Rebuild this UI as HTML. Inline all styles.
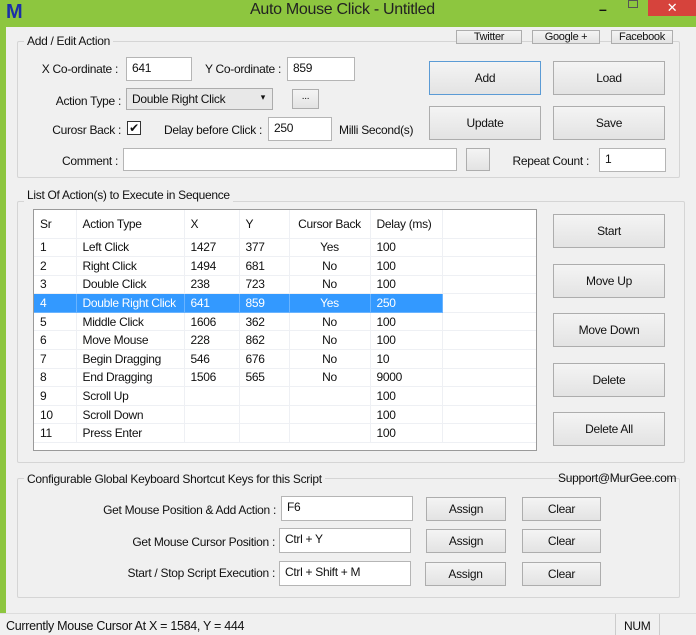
<!DOCTYPE html>
<html><head><meta charset="utf-8"><style>
*{box-sizing:border-box;margin:0;padding:0}
body{width:696px;height:635px;position:relative;overflow:hidden;background:#8dc63f;font-family:"Liberation Sans",sans-serif;font-size:12px;color:#111;letter-spacing:-0.3px}
.a{position:absolute;white-space:nowrap}
.body{position:absolute;left:6px;top:27px;width:690px;height:586px;background:#f0f0f0}
.grp{position:absolute;border:1px solid #d5d5d5;border-radius:2px}
.gt{position:absolute;background:#f0f0f0;padding:0 3px}
.btn{position:absolute;background:linear-gradient(#f4f4f4,#e3e3e3);border:1px solid #adadad;text-align:center;font-size:12px}
.tb{position:absolute;background:#fff;border:1px solid #b5b5b5;padding:3px 0 0 5px}
.lbl{position:absolute;text-align:right;white-space:nowrap}
table{border-collapse:collapse;font-size:12px}
td{height:18.6px;padding:0 0 0 6px;border-bottom:1px solid #eef0f4;border-right:1px solid #eef0f4}
.sel td{background:#3399ff;color:#fff;border-color:#6ab4ff}
</style></head><body>
<div class="a" style="left:6px;top:1px;font-size:20px;font-weight:bold;color:#1a2fa8">M</div>
<div class="a" style="left:250px;top:1px;font-size:16px;color:#222">Auto Mouse Click - Untitled</div>
<div class="a" style="left:599px;top:1px;font-size:14px;font-weight:bold">–</div>
<div class="a" style="left:628px;top:0px;width:10px;height:8px;border:1px solid #555"></div>
<div class="a" style="left:648px;top:0;width:48px;height:16px;background:#d6433c;color:#fff;text-align:center;font-size:13px;line-height:15px">✕</div>
<div class="body"></div>

<div class="grp" style="left:17px;top:41px;width:663px;height:137px"></div>
<div class="gt" style="left:24px;top:34px">Add / Edit Action</div>
<div class="btn" style="left:456px;top:30px;width:66px;height:14px;font-size:11px;line-height:12px">Twitter</div>
<div class="btn" style="left:532px;top:30px;width:68px;height:14px;font-size:11px;line-height:12px">Google +</div>
<div class="btn" style="left:611px;top:30px;width:62px;height:14px;font-size:11px;line-height:12px">Facebook</div>
<div class="lbl" style="right:578px;top:62px">X Co-ordinate :</div>
<div class="tb" style="left:126px;top:57px;width:66px;height:24px">641</div>
<div class="lbl" style="right:415px;top:62px">Y Co-ordinate :</div>
<div class="tb" style="left:287px;top:57px;width:68px;height:24px">859</div>
<div class="lbl" style="right:575px;top:94px">Action Type :</div>
<div class="tb" style="left:126px;top:88px;width:147px;height:22px;background:#e8e8e8;border-color:#acacac">Double Right Click<span style="position:absolute;right:7px;top:3px;font-size:9px">▾</span></div>
<div class="btn" style="left:292px;top:89px;width:27px;height:20px;line-height:14px;font-size:10px">...</div>
<div class="lbl" style="right:575px;top:123px">Curosr Back :</div>
<div class="a" style="left:127px;top:121px;width:14px;height:14px;border:1px solid #333;background:#fff;font-size:12px;line-height:12px;text-align:center">✔</div>
<div class="lbl" style="right:434px;top:123px">Delay before Click :</div>
<div class="tb" style="left:268px;top:117px;width:64px;height:24px">250</div>
<div class="lbl" style="left:339px;top:123px">Milli Second(s)</div>
<div class="lbl" style="right:578px;top:154px">Comment :</div>
<div class="tb" style="left:123px;top:148px;width:334px;height:23px"></div>
<div class="btn" style="left:466px;top:148px;width:24px;height:23px"></div>
<div class="lbl" style="right:107px;top:154px">Repeat Count :</div>
<div class="tb" style="left:599px;top:148px;width:67px;height:24px">1</div>
<div class="btn" style="left:429px;top:61px;width:112px;height:34px;line-height:32px;border-color:#5b9bd5">Add</div>
<div class="btn" style="left:553px;top:61px;width:112px;height:34px;line-height:32px">Load</div>
<div class="btn" style="left:429px;top:106px;width:112px;height:34px;line-height:32px">Update</div>
<div class="btn" style="left:553px;top:106px;width:112px;height:34px;line-height:32px">Save</div>

<div class="grp" style="left:17px;top:201px;width:668px;height:262px"></div>
<div class="gt" style="left:24px;top:188px">List Of Action(s) to Execute in Sequence</div>
<div class="a" style="left:33px;top:209px;width:504px;height:242px;background:#fff;border:1px solid #9a9a9a;overflow:hidden">
<table style="width:504px">
<tr style="height:28px"><td style="width:42px;height:28px">Sr</td><td style="width:108px">Action Type</td><td style="width:55px">X</td><td style="width:50px">Y</td><td style="width:81px;text-align:center;padding:0">Cursor Back</td><td style="width:72px">Delay (ms)</td><td></td></tr>
<tr><td>1</td><td>Left Click</td><td>1427</td><td>377</td><td style="text-align:center;padding:0">Yes</td><td>100</td><td></td></tr>
<tr><td>2</td><td>Right Click</td><td>1494</td><td>681</td><td style="text-align:center;padding:0">No</td><td>100</td><td></td></tr>
<tr><td>3</td><td>Double Click</td><td>238</td><td>723</td><td style="text-align:center;padding:0">No</td><td>100</td><td></td></tr>
<tr class="sel"><td>4</td><td>Double Right Click</td><td>641</td><td>859</td><td style="text-align:center;padding:0">Yes</td><td>250</td><td style="background:#fff;border-color:#eef0f4"></td></tr>
<tr><td>5</td><td>Middle Click</td><td>1606</td><td>362</td><td style="text-align:center;padding:0">No</td><td>100</td><td></td></tr>
<tr><td>6</td><td>Move Mouse</td><td>228</td><td>862</td><td style="text-align:center;padding:0">No</td><td>100</td><td></td></tr>
<tr><td>7</td><td>Begin Dragging</td><td>546</td><td>676</td><td style="text-align:center;padding:0">No</td><td>10</td><td></td></tr>
<tr><td>8</td><td>End Dragging</td><td>1506</td><td>565</td><td style="text-align:center;padding:0">No</td><td>9000</td><td></td></tr>
<tr><td>9</td><td>Scroll Up</td><td></td><td></td><td></td><td>100</td><td></td></tr>
<tr><td>10</td><td>Scroll Down</td><td></td><td></td><td></td><td>100</td><td></td></tr>
<tr><td>11</td><td>Press Enter</td><td></td><td></td><td></td><td>100</td><td></td></tr>
</table></div>
<div class="btn" style="left:553px;top:214px;width:112px;height:34px;line-height:32px">Start</div>
<div class="btn" style="left:553px;top:264px;width:112px;height:34px;line-height:32px">Move Up</div>
<div class="btn" style="left:553px;top:313px;width:112px;height:34px;line-height:32px">Move Down</div>
<div class="btn" style="left:553px;top:363px;width:112px;height:34px;line-height:32px">Delete</div>
<div class="btn" style="left:553px;top:412px;width:112px;height:34px;line-height:32px">Delete All</div>

<div class="grp" style="left:17px;top:478px;width:663px;height:120px"></div>
<div class="gt" style="left:24px;top:472px">Configurable Global Keyboard Shortcut Keys for this Script</div>
<div class="a" style="left:558px;top:471px">Support@MurGee.com</div>
<div class="lbl" style="right:420px;top:503px">Get Mouse Position &amp; Add Action :</div>
<div class="tb" style="left:281px;top:496px;width:132px;height:25px">F6</div>
<div class="btn" style="left:426px;top:497px;width:80px;height:24px;line-height:22px">Assign</div>
<div class="btn" style="left:522px;top:497px;width:79px;height:24px;line-height:22px">Clear</div>
<div class="lbl" style="right:421px;top:535px">Get Mouse Cursor Position :</div>
<div class="tb" style="left:279px;top:528px;width:132px;height:25px">Ctrl + Y</div>
<div class="btn" style="left:426px;top:529px;width:80px;height:24px;line-height:22px">Assign</div>
<div class="btn" style="left:522px;top:529px;width:79px;height:24px;line-height:22px">Clear</div>
<div class="lbl" style="right:421px;top:566px">Start / Stop Script Execution :</div>
<div class="tb" style="left:279px;top:561px;width:132px;height:25px">Ctrl + Shift + M</div>
<div class="btn" style="left:425px;top:562px;width:81px;height:24px;line-height:22px">Assign</div>
<div class="btn" style="left:522px;top:562px;width:79px;height:24px;line-height:22px">Clear</div>

<div class="a" style="left:0;top:613px;width:696px;height:22px;background:#f0f0f0;border-top:1px solid #ddd"></div>
<div class="a" style="left:6px;top:619px;font-size:12.5px">Currently Mouse Cursor At X = 1584, Y = 444</div>
<div class="a" style="left:615px;top:614px;width:45px;height:21px;border-left:1px solid #ccc;border-right:1px solid #ccc;padding:5px 0 0 8px">NUM</div>
</body></html>
